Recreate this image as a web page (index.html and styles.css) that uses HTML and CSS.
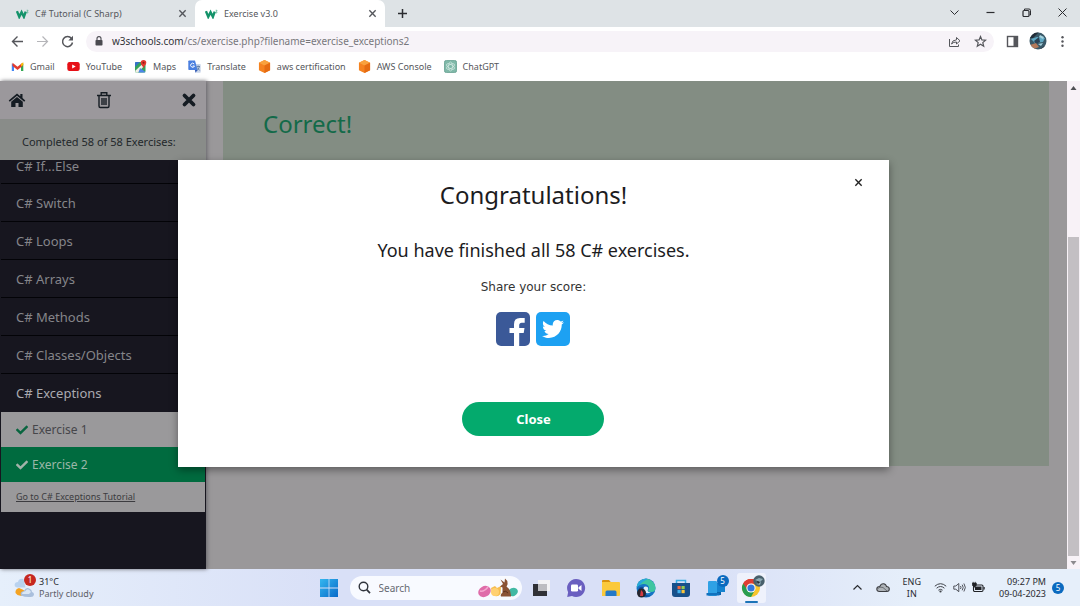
FILE: index.html
```html
<!DOCTYPE html>
<html lang="en">
<head>
<meta charset="utf-8">
<title>Exercise v3.0</title>
<link rel="stylesheet" href="styles.css">
</head>
<body>
<svg class="defs" aria-hidden="true">
  <symbol id="w3" viewBox="0 0 14 10"><path d="M1 2l2.500 6L6 3l2.500 5L10.500 2.500" fill="none" stroke="#14936a" stroke-width="2.600"/><path d="M11.500 1h1.500l-.8 1.200q1.200.3.600 1.500l-1.200.3" fill="none" stroke="#4fb08d" stroke-width=".8"/></symbol>
  <symbol id="x" viewBox="0 0 10 10"><path d="M1.500 1.500l7 7M8.500 1.500l-7 7" fill="none" stroke="currentColor" stroke-width="1.500"/></symbol>
  <symbol id="cube" viewBox="0 0 14 14"><path d="M7 0l6 3v8l-6 3-6-3V3z" fill="#f58220"/><path d="M7 0l6 3-6 3-6-3z" fill="#f9a13e"/><path d="M7 6l6-3v8l-6 3z" fill="#e56b12"/></symbol>
  <symbol id="check" viewBox="0 0 512 512"><path fill="currentColor" d="M173.898 439.404l-166.400-166.400c-9.997-9.997-9.997-26.206 0-36.204l36.203-36.204c9.997-9.998 26.207-9.998 36.204 0L192 312.690 432.095 72.596c9.997-9.997 26.207-9.997 36.204 0l36.203 36.204c9.997 9.997 9.997 26.206 0 36.204l-294.400 294.401c-9.998 9.997-26.207 9.997-36.204-.001z"/></symbol>
</svg>

<header class="browser">
  <div class="tabs">
    <div class="tab">
      <svg class="fav"><use href="#w3"/></svg><span class="tab-title">C# Tutorial (C Sharp)</span>
      <button class="icon-btn" aria-label="Close tab"><svg class="i9"><use href="#x"/></svg></button>
    </div>
    <div class="tab active">
      <svg class="fav"><use href="#w3"/></svg><span class="tab-title">Exercise v3.0</span>
      <button class="icon-btn" aria-label="Close tab"><svg class="i9"><use href="#x"/></svg></button>
    </div>
    <button class="icon-btn new-tab" aria-label="New tab"><svg class="i11" viewBox="0 0 11 11"><path d="M5.500 1v9M1 5.500h9" stroke="currentColor" stroke-width="1.500"/></svg></button>
    <div class="window-controls">
      <button class="icon-btn" aria-label="Search tabs"><svg class="i11" viewBox="0 0 11 11"><path d="M1.500 3.500l4 4 4-4" fill="none" stroke="currentColor"/></svg></button>
      <button class="icon-btn" aria-label="Minimize"><svg class="i11" viewBox="0 0 11 11"><path d="M1.500 5.500h8" stroke="currentColor" stroke-width="1.200"/></svg></button>
      <button class="icon-btn" aria-label="Restore"><svg class="i11" viewBox="0 0 11 11"><path d="M3.500 3V2h4.500q1.500 0 1.500 1.500V8h-1" fill="none" stroke="currentColor"/><rect x="2" y="3.500" width="6" height="6" rx="1" fill="none" stroke="currentColor" stroke-width="1.200"/></svg></button>
      <button class="icon-btn" aria-label="Close"><svg class="i11" viewBox="0 0 11 11"><path d="M1.500 1.500l8 8M9.500 1.500l-8 8" stroke="currentColor"/></svg></button>
    </div>
  </div>

  <div class="toolbar">
    <button class="icon-btn" aria-label="Back"><svg class="i13" viewBox="0 0 13 13"><path d="M12 6.500H2M6.500 1.500l-5 5 5 5" fill="none" stroke="currentColor" stroke-width="1.400"/></svg></button>
    <button class="icon-btn faded" aria-label="Forward"><svg class="i13" viewBox="0 0 13 13"><path d="M1 6.500h10M6.500 1.500l5 5-5 5" fill="none" stroke="currentColor" stroke-width="1.200"/></svg></button>
    <button class="icon-btn" aria-label="Reload"><svg class="i13" viewBox="0 0 13 13"><path d="M10.500 3.500a5 5 0 1 0 1 4" fill="none" stroke="currentColor" stroke-width="1.500"/><path d="M12 .8v4.700H7.300z" fill="currentColor"/></svg></button>
    <div class="address">
      <svg class="lock" viewBox="0 0 8 10"><rect x=".5" y="4" width="7" height="5.500" rx=".8" fill="#4a4a50"/><path d="M2 4V2.600a2 2 0 0 1 4 0V4" fill="none" stroke="#4a4a50" stroke-width="1.100"/></svg>
      <span class="url"><span class="host">w3schools.com</span>/cs/exercise.php?filename=exercise_exceptions2</span>
      <button class="icon-btn" aria-label="Share"><svg class="i13" viewBox="0 0 13 13"><path d="M1.500 4v7.500h9V9.500" fill="none" stroke="currentColor"/><path d="M3.500 9q.5-4 5-4.200V2.500L12 5.800 8.500 9V7Q5.500 6.800 3.500 9z" fill="none" stroke="currentColor" stroke-linejoin="round"/></svg></button>
      <button class="icon-btn" aria-label="Bookmark"><svg class="i13" viewBox="0 0 13 13"><path d="M6.500 1.500l1.400 3.400 3.700.3-2.800 2.400.9 3.600-3.200-2-3.200 2 .9-3.600L1.400 5.200l3.700-.3z" fill="none" stroke="currentColor" stroke-width="1.200"/></svg></button>
    </div>
    <button class="icon-btn" aria-label="Side panel"><svg class="i13" viewBox="0 0 13 13"><rect x="1.500" y="1.500" width="10" height="10" fill="none" stroke="currentColor" stroke-width="1.400"/><path d="M7.500 1.500h4v10h-4z" fill="currentColor"/></svg></button>
    <button class="icon-btn" aria-label="Profile"><svg class="avatar" viewBox="0 0 18 18"><clipPath id="av"><circle cx="9" cy="9" r="8.500"/></clipPath><g clip-path="url(#av)"><path fill="#3a5968" d="M0 0h18v18H0z"/><path fill="#232d38" d="M0 0h10L4 6H0zM10 18l8-6v6z"/><path d="M2 7l6-2 8 1-2 4-8 1z" fill="#5fa9c4"/><path d="M5 9l5-4 1 5-4 2z" fill="#2b4154"/><path d="M1 13l6-2 3 4-5 2z" fill="#b4795a"/><path d="M11 3l4 2-1 2-4-2zM9 12l5-1-2 3z" fill="#a4d2de"/></g></svg></button>
    <button class="icon-btn" aria-label="Menu"><svg class="i13" viewBox="0 0 13 13" fill="currentColor"><circle cx="6.500" cy="2.200" r="1.200"/><circle cx="6.500" cy="6.500" r="1.200"/><circle cx="6.500" cy="10.800" r="1.200"/></svg></button>
  </div>

  <nav class="bookmarks">
    <a href="#"><svg class="i13" viewBox="0 0 13 13"><path d="M.8 11V3.500L3 5v6z" fill="#4285f4"/><path d="M10 5l2.300-1.500V11H10z" fill="#34a853"/><path d="M1.500 2.800l5 4 5-4V6l-5 4-5-4z" fill="#e33b2e"/><path d="M10 4l2.300-1.800V5L10 6.500z" fill="#fbbc04"/></svg>Gmail</a>
    <a href="#"><svg class="i13" viewBox="0 0 13 13"><rect x=".3" y="2" width="12.400" height="9" rx="2.200" fill="#e60f16"/><path d="M5.200 4.500l3.500 2-3.500 2z" fill="#fff"/></svg>YouTube</a>
    <a href="#"><svg class="i13" viewBox="0 0 13 13"><rect x="1" y="2" width="10.500" height="10.500" rx="1.500" fill="#34a35a"/><path d="M1 11L10 2.500l1.500 2L4 12.500H2z" fill="#f1efe6"/><path d="M6 8l5.500 4-1 .5H4.500z" fill="#4d86e8"/><path d="M1 3q0-1 1-1h4L1 7z" fill="#3571c9"/><path d="M9.500 0a2.800 2.800 0 0 1 2.800 2.800C12.300 5 10 6 9.500 8.500 9 6 6.700 5 6.700 2.800A2.800 2.800 0 0 1 9.500 0z" fill="#e2382e"/><circle cx="9.500" cy="2.800" r="1" fill="#8e1b15"/></svg>Maps</a>
    <a href="#"><svg class="i13" viewBox="0 0 13 13"><path d="M5 4h7q.7 0 .7.700v7.300q0 .7-.7.700H7.500z" fill="#c9d5ea"/><path d="M1 .5h6L9.500 10H1q-.7 0-.7-.7V1.200Q.3.500 1 .5z" fill="#4a7fe0"/><path d="M6.200 4A2 2 0 1 0 6.500 6H4.700" fill="none" stroke="#fff"/><path d="M8.500 6.500h3.500M10.200 5.500v1M11.500 6.500Q10.500 10 8.800 10.500M9.200 7.500l2.500 3" fill="none" stroke="#56759f" stroke-width=".8"/><path d="M7 10h2.500L7.500 12.700z" fill="#2e56b5"/></svg>Translate</a>
    <a href="#"><svg class="i13"><use href="#cube"/></svg>aws certification</a>
    <a href="#"><svg class="i13"><use href="#cube"/></svg>AWS Console</a>
    <a href="#"><svg class="i13" viewBox="0 0 13 13"><rect x=".4" y=".4" width="12.200" height="12.200" rx="2" fill="#7fb8a8" stroke="#609c8c" stroke-width=".8"/><g fill="none" stroke="#d3e9e3" stroke-width=".7"><ellipse cx="6.500" cy="6.500" rx="2" ry="4.500"/><ellipse cx="6.500" cy="6.500" rx="2" ry="4.500" transform="rotate(60 6.500 6.500)"/><ellipse cx="6.500" cy="6.500" rx="2" ry="4.500" transform="rotate(120 6.500 6.500)"/></g></svg>ChatGPT</a>
  </nav>
</header>

<div class="viewport">
  <div class="page">
    <aside class="sidebar">
      <div class="side-tools">
        <a href="#" aria-label="Home"><svg class="i18" viewBox="0 0 18 16"><path d="M9 1.500L.7 8.500l1.100 1.200L9 3.700l7.200 6 1.100-1.200-2.800-2.400V2h-2.200v2.300z"/><path d="M9 5l-5.800 4.800v5.200h4.300v-4h3v4h4.300V9.800z"/></svg></a>
        <button class="icon-btn" aria-label="Reset"><svg class="i18" viewBox="0 0 18 18"><path d="M2 4.500h14M6.200 4V1.800h5.600V4M4 4.500V15q0 1.500 1.300 1.500h7.400Q14 16.500 14 15V4.500M7 7v7M9 7v7M11 7v7" fill="none" stroke="currentColor" stroke-width="1.400"/></svg></button>
        <button class="icon-btn" aria-label="Hide menu"><svg class="i16" viewBox="0 0 16 16"><path d="M3.500 3.500l9 9M12.500 3.500l-9 9" fill="none" stroke="currentColor" stroke-width="3.800" stroke-linecap="round"/></svg></button>
      </div>
      <p class="completed">Completed 58 of 58 Exercises:</p>
      <nav class="topics">
        <a class="topic partial" href="#">C# If...Else</a>
        <a class="topic" href="#">C# Switch</a>
        <a class="topic" href="#">C# Loops</a>
        <a class="topic" href="#">C# Arrays</a>
        <a class="topic" href="#">C# Methods</a>
        <a class="topic" href="#">C# Classes/Objects</a>
        <a class="topic open" href="#">C# Exceptions</a>
        <a class="exercise" href="#"><svg class="tick"><use href="#check"/></svg>Exercise 1</a>
        <a class="exercise current" href="#"><svg class="tick"><use href="#check"/></svg>Exercise 2</a>
        <a class="tutorial" href="#">Go to C# Exceptions Tutorial</a>
      </nav>
    </aside>
    <main class="content"><section class="result"><h2>Correct!</h2></section></main>
    <div class="overlay">
      <div class="dialog" role="dialog" aria-labelledby="dialog-title">
        <button class="icon-btn dismiss" aria-label="Dismiss"><svg class="i9"><use href="#x"/></svg></button>
        <h1 id="dialog-title">Congratulations!</h1>
        <p class="finished">You have finished all 58 C# exercises.</p>
        <p class="share-label">Share your score:</p>
        <div class="share">
          <a href="#" aria-label="Facebook"><svg class="i34" viewBox="0 0 34 34"><rect width="34" height="34" rx="5" fill="#3b5998"/><path d="M18 34V21h-4.500v-5H18v-3.700Q18 6 24 6h4.700v4.800h-3q-2.500 0-2.500 2.500V16h5.300l-.8 5h-4.500v13z" fill="#fff"/></svg></a>
          <a href="#" aria-label="Twitter"><svg class="i34" viewBox="0 0 34 34"><rect width="34" height="34" rx="5" fill="#1da1f2"/><svg x="6" y="6" width="22" height="22" viewBox="0 0 512 512"><path fill="#fff" d="M459.370 151.716c.325 4.548.325 9.097.325 13.645 0 138.720-105.583 298.558-298.558 298.558-59.452 0-114.680-17.219-161.137-47.106 8.447.974 16.568 1.299 25.340 1.299 49.055 0 94.213-16.568 130.274-44.832-46.132-.975-84.792-31.188-98.112-72.772 6.498.974 12.995 1.624 19.818 1.624 9.421 0 18.843-1.300 27.614-3.573-48.081-9.747-84.143-51.980-84.143-102.985v-1.299c13.969 7.797 30.214 12.670 47.431 13.319-28.264-18.843-46.781-51.005-46.781-87.391 0-19.492 5.197-37.360 14.294-52.954 51.655 63.675 129.300 105.258 216.365 109.807-1.624-7.797-2.599-15.918-2.599-24.040 0-57.828 46.782-104.934 104.934-104.934 30.213 0 57.502 12.670 76.670 33.137 23.715-4.548 46.456-13.320 66.599-25.340-7.798 24.366-24.366 44.833-46.132 57.827 21.117-2.273 41.584-8.122 60.426-16.243-14.292 20.791-32.161 39.308-52.628 54.253z"/></svg></svg></a>
        </div>
        <button class="close-btn">Close</button>
      </div>
    </div>
  </div>
  <div class="scrollbar" aria-hidden="true">
    <svg class="i13" viewBox="0 0 13 13"><path d="M3.500 9l3-4 3 4z" fill="#505055"/></svg>
    <div class="track"><div class="thumb"></div></div>
    <svg class="i13" viewBox="0 0 13 13"><path d="M3.500 5l3 4 3-4z" fill="#8c8a8e"/></svg>
  </div>
</div>

<footer class="taskbar">
  <div class="weather">
    <svg class="weather-icon" viewBox="0 0 22 26"><path d="M1 11.500q-1.500-4 3-4.500 1-4 5.500-3l2 8.500H3z" fill="#b9d2ef"/><path d="M5 13q-4 1-3.500 5 2 3.500 7 2.500l5-3-5-3z" fill="#f4a322"/><path d="M7 20.500q-1.500-4 3-4.500 2-4.500 6-2 2 1 2 3 3.500 1.500 1 4.500-6 1.500-12-1z" fill="#a9bfdd"/><path d="M8 19q0-3 3-2.500 3-4.500 6 .5l-2 2z" fill="#dbe7f5"/></svg>
    <span class="alert">1</span>
    <div><div class="temp">31°C</div><div class="cond">Partly cloudy</div></div>
  </div>
  <div class="apps">
    <button class="app" aria-label="Start"><svg class="i20" viewBox="0 0 20 20"><defs><linearGradient id="win" x2="1" y2="1"><stop stop-color="#35b7ef"/><stop offset="1" stop-color="#0869c9"/></linearGradient></defs><path fill="url(#win)" d="M1 1h8.600v8.600H1zM10.400 1H19v8.600h-8.600zM1 10.400h8.600V19H1zM10.400 10.400H19V19h-8.600z"/></svg></button>
    <label class="search"><svg class="i13" viewBox="0 0 13 13"><circle cx="5.500" cy="5.500" r="4.300" fill="none" stroke="#30343c" stroke-width="1.400"/><path d="M8.700 8.700l3.300 3.500" stroke="#30343c" stroke-width="1.700"/></svg><input type="text" placeholder="Search" aria-label="Search"><svg class="easter" viewBox="0 0 40 20"><ellipse cx="6.500" cy="13.500" rx="6.500" ry="5.300" transform="rotate(-30 6.500 13.500)" fill="#df6ca9"/><path d="M2 13q4 1 8-4" stroke="#f5a7cf" fill="none" stroke-width="1.500"/><path d="M13 10l4-2 2 2 4-2-.5 8q-3 4-8 1z" fill="#f6bd4e"/><circle cx="17" cy="14" r="4" fill="#ffd071"/><ellipse cx="35" cy="14" rx="5" ry="4" transform="rotate(-25 35 14)" fill="#42b9a3"/><path d="M25 6l-2.500-4.500 4 3L27 .5q3 2 2.500 6l-1 2q5 4 4.500 10H23q-1-2 1.500-4V9.500L22 8.500z" fill="#8a5234"/><path d="M25 14q3-2 5 1" stroke="#5b311e" fill="none"/></svg></label>
    <button class="app" aria-label="Task view"><svg class="i20" viewBox="0 0 20 20"><path d="M2 6h14v12H2z" fill="#303136"/><path d="M7 2h12v11H7z" fill="#f3f3f5"/><path d="M7 6h9v7H7z" fill="#bdbdc1"/></svg></button>
    <button class="app" aria-label="Chat"><svg class="i20" viewBox="0 0 20 20"><path d="M10 1a9 9 0 1 1-4 17L1.200 19l.9-4.800A9 9 0 0 1 10 1z" fill="#6a5fc0"/><rect x="5" y="6.500" width="7" height="7" rx="1.200" fill="#fff"/><path d="M12.500 9.200L15.500 7v6l-3-2.200z" fill="#fff"/></svg></button>
    <button class="app" aria-label="File Explorer"><svg class="i20" viewBox="0 0 20 20"><path d="M1 3q0-1 1-1h6l2 2.200H1z" fill="#d9920e"/><path d="M1 4h17q1 0 1 1v12q0 1-1 1H1z" fill="#fbc93c"/><path d="M4.500 18v-4q0-1.500 1.500-1.500h8q1.500 0 1.500 1.500v4z" fill="#2479c8"/></svg></button>
    <button class="app" aria-label="Edge"><svg class="i20" viewBox="0 0 20 20"><circle cx="10" cy="10" r="9.500" fill="#1675c5"/><path d="M.6 9A9.500 9.500 0 0 1 19.500 10q0 4-4 4-3 0-3.500-1.500 1-1.500 1-3Q12 5.500 7 6 3 6.500.6 9z" fill="#3ec5a0"/><path d="M.6 9A9.500 9.500 0 0 1 12 1Q7 3 4 7z" fill="#26a7dc"/><path d="M7.500 9q-2 4 1 7 3 2.500 7.500 1-5 3-10 .7Q1 15 3 10q2-2 4.500-1z" fill="#114b94"/><path d="M8 9q2-1 4 .5.500 1.500-.5 3Q12 14.500 15 14.500q-5 2-7-1-1-2.500 0-4.500z" fill="#e1edf7"/><circle cx="5.500" cy="15" r="4.500" fill="#252630"/><path d="M5 12q3 2 2 6H4z" fill="#d33c42"/></svg></button>
    <button class="app" aria-label="Store"><svg class="i20" viewBox="0 0 20 20"><path d="M5.500 5V2.500h9V5" fill="none" stroke="#36aee4" stroke-width="1.500"/><path d="M1 5h18v11q0 3-3 3H4q-3 0-3-3z" fill="#17508a"/><path d="M6.500 8h3.200v3.200H6.500z" fill="#ee673e"/><path d="M10.500 8h3.200v3.200h-3.200z" fill="#94c94d"/><path d="M6.500 12h3.200v3.200H6.500z" fill="#3fb1ed"/><path d="M10.500 12h3.200v3.200h-3.200z" fill="#fac53a"/></svg></button>
    <button class="app" aria-label="Phone Link"><svg class="i20" viewBox="0 0 20 20"><path d="M7 5h12v9H7z" fill="#1482cf"/><path d="M10 14h5v3h-5z" fill="#0b64a9"/><rect x="2" y="3" width="9" height="15" rx="1.200" fill="#2fa1e5"/><path d="M.5 15h13v2.500H.5z" fill="#1271bd"/></svg><span class="count">5</span></button>
    <button class="app running" aria-label="Chrome"><svg class="i20" viewBox="0 0 20 20"><circle cx="10" cy="10" r="9" fill="#f8c52d"/><path d="M10 10L2.200 5.500A9 9 0 0 1 17.800 5.500H10z" fill="#df3e33"/><path d="M2.200 5.500A9 9 0 0 0 10 19l4-7z" fill="#299d50"/><path d="M2.200 5.500A9 9 0 0 1 17.800 5.500H10L6 11z" fill="#df3e33"/><circle cx="10" cy="10" r="4.600" fill="#fff"/><circle cx="10" cy="10" r="3.600" fill="#3278dd"/></svg><svg class="profile-dot" viewBox="0 0 12 12"><circle cx="6" cy="6" r="5.700" fill="#48606c"/><path d="M2 5l4-2 4 1-3 3zM3 9l5-2-1 3z" fill="#8eabb5"/><path d="M4 6l3 1-2 2z" fill="#262e36"/></svg></button>
  </div>
  <div class="tray">
    <button class="icon-btn" aria-label="Hidden icons"><svg class="i11" viewBox="0 0 11 11"><path d="M1.500 7.500l4-4 4 4" fill="none" stroke="currentColor" stroke-width="1.200"/></svg></button>
    <svg class="cloud" viewBox="0 0 14 11"><path d="M3.500 9.500Q.8 9.500.8 7t3-2.500Q5 1.500 7.500 1.700t3 2.800q2.800.2 2.800 2.500t-2.500 2.500z" fill="#aeb3b8" stroke="#3b3d42" stroke-width="1.100"/><path d="M1 7q3-3 6-1.500L11 9" fill="none" stroke="#696d72"/></svg>
    <div class="lang">ENG<br>IN</div>
    <div class="status">
      <svg class="i13" viewBox="0 0 13 13"><g fill="none" stroke="#3f4249" stroke-width="1"><path d="M.8 5.200q5.700-5 11.400 0M2.600 7.200q3.900-3.400 7.800 0M4.400 9.200q2.100-1.700 4.200 0"/></g><circle cx="6.500" cy="10.500" r="1.100" fill="#3f4249"/></svg>
      <svg class="i13" viewBox="0 0 13 13"><path d="M.8 5v3.200h2l3 2.500V2.500L2.800 5z M7.500 5q1 1.500 0 3M9.200 3.700q2 2.800 0 5.600M10.900 2.500q2.900 4 0 8" fill="none" stroke="#3f4249" stroke-width=".9"/></svg>
      <svg class="i13" viewBox="0 0 13 13"><rect x="1.500" y="4" width="9.500" height="6.500" rx="1.200" fill="none" stroke="#202226" stroke-width="1.100"/><path d="M3 5.500h6.500V9H3zM11.500 6h1.200v2.500h-1.200z" fill="#202226"/><path d="M.3 2h4v2.500L2.500 6.200.5 4.500zM1.200.8v1.500M3.300.8v1.500" fill="#202226" stroke="#202226" stroke-width=".7"/></svg>
    </div>
    <div class="clock">09:27 PM<br>09-04-2023</div>
    <span class="notices">5</span>
  </div>
</footer>
</body>
</html>
```
FILE: styles.css
```css
* { box-sizing: border-box; }
body {
  margin: 0;
  height: 100vh;
  display: flex;
  flex-direction: column;
  overflow: hidden;
  font-family: "Noto Sans", "Open Sans", sans-serif;
  font-size: 9px;
  line-height: 12px;
  color: #55575c;
}
h1, h2, p { margin: 0; font-weight: 400; }
a { color: inherit; text-decoration: none; }
svg { display: block; flex: none; }
button { font: inherit; color: inherit; }
.defs { position: absolute; width: 0; height: 0; }
.icon-btn { display: grid; place-items: center; padding: 0; border: 0; background: none; }
.i9 { width: 9px; height: 9px; }
.i11 { width: 11px; height: 11px; }
.i13 { width: 13px; height: 13px; }
.i16 { width: 16px; height: 16px; }
.i18 { width: 18px; height: 18px; }
.i20 { width: 20px; height: 20px; }
.i34 { width: 34px; height: 34px; }

.browser { flex: none; background: #fff; }
.tabs { display: flex; height: 27px; background: #dee3e6; }
.tab { display: flex; align-items: center; gap: 6px; width: 195px; padding: 0 8px 0 16px; }
.tab.active { width: 190px; padding-left: 10px; background: #fff; border-radius: 7px 7px 0 0; }
.fav { width: 13px; height: 10px; }
.tab-title { flex: 1; }
.new-tab { width: 34px; color: #2b2c30; }
.window-controls { display: flex; margin-left: auto; color: #2b2c30; }
.window-controls .icon-btn { width: 36px; height: 24px; }
.toolbar { display: flex; align-items: center; height: 28px; padding: 0 5px; color: #55565b; }
.toolbar > .icon-btn { width: 25px; }
.faded { color: #b5b5b9; }
.address { flex: 1; display: flex; align-items: center; height: 21px; margin: 0 6px; padding: 0 1px 0 9px; border-radius: 11px; background: #f7f3f8; }
.address .icon-btn { width: 26px; }
.lock { width: 8px; height: 10px; margin-right: 9px; }
.url { flex: 1; font-size: 10px; color: #77777c; }
.host { color: #323338; }
.avatar { width: 18px; height: 18px; }
.bookmarks { display: flex; gap: 12px; height: 26px; padding: 0 11px 3px; }
.bookmarks a { display: flex; align-items: center; gap: 6px; }

.viewport { flex: 1; display: flex; min-height: 0; }
.page { position: relative; flex: 1; display: flex; min-width: 0; background: #9a989a; }
.sidebar { flex: none; display: flex; flex-direction: column; width: 206px; background: #17161f; box-shadow: 1px 0 4px #66646a; }
.side-tools { flex: none; display: flex; align-items: center; justify-content: space-between; height: 38px; padding: 0 9px 0 8px; background: #9b989c; color: #151c23; fill: #151c23; }
.completed { flex: none; height: 41px; padding: 13px 0 0 22px; background: #898c89; color: #23282b; font-size: 11px; line-height: 20px; }
.topics { flex: 1; min-height: 0; display: flex; flex-direction: column; padding: 0 1px; }
.topics > * { flex: none; padding-left: 15px; }
.topic { height: 38px; border-bottom: 1px solid #030307; font-size: 13px; line-height: 38px; color: #85858a; }
.topic.partial { height: 24px; line-height: 12px; }
.topic.open { border: 0; color: #aaaab0; }
.exercise { display: flex; align-items: center; gap: 4px; height: 35px; background: #9a999b; color: #46464a; font-size: 12px; }
.exercise.current { background: #006b3f; color: #9bb7a8; }
.tick { width: 12px; height: 12px; color: #08653f; }
.current .tick { color: #a3b3aa; }
.tutorial { height: 30px; background: #9a999b; font-size: 9px; line-height: 30px; color: #3c3c40; text-decoration: underline; }
.content { flex: 1; padding: 0 18px 0 17px; }
.result { height: calc(100% - 103px); padding: 24px 40px; background: #838d83; }
.result h2 { font-size: 24px; line-height: 38px; color: #136a49; }

.overlay { position: absolute; inset: 0; display: flex; justify-content: center; align-items: flex-start; padding-top: 79px; }
.dialog { position: relative; display: flex; flex-direction: column; align-items: center; width: calc(100% * 2 / 3); padding: 16px 16px 31px; background: #fff; box-shadow: 0 3px 8px rgba(0, 0, 0, .4); color: #1c1c1e; }
.dialog h1 { font-size: 24px; line-height: 38px; }
.dismiss { position: absolute; top: 18px; right: 26px; color: #222; }
.finished { margin-top: 22px; font-size: 18px; line-height: 28px; }
.share-label { margin-top: 13px; font: 12px/20px "DejaVu Sans", Verdana, sans-serif; color: #333; }
.share { display: flex; gap: 6px; margin: 15px 0 56px; }
.close-btn { width: 142px; height: 34px; border: 0; border-radius: 17px; background: #04aa6d; color: #fff; font-size: 13px; font-weight: 700; }
.scrollbar { flex: none; display: flex; flex-direction: column; width: 13px; background: #f8f2f7; }
.track { flex: 1; display: flex; align-items: flex-end; padding: 0 1px; }
.thumb { width: 100%; height: 69%; background: #c3bfc3; }

.taskbar { flex: none; display: grid; grid-template-columns: 1fr auto 1fr; height: 37px; background: linear-gradient(90deg, #e6effb, #d9e0f7 30%, #d9e0f7 65%, #e6effa 85%); }
.weather { position: relative; display: flex; align-items: center; gap: 3px; padding-left: 14px; }
.weather-icon { width: 22px; height: 26px; }
.temp { color: #26282c; }
.cond { color: #5d6068; }
.alert, .count, .notices { display: grid; place-items: center; width: 12px; height: 12px; border-radius: 50%; color: #fff; font-size: 8px; line-height: 12px; background: #0b6abf; }
.alert { position: absolute; left: 24px; top: 5px; background: #c62820; }
.apps { display: flex; align-items: center; }
.app { position: relative; display: grid; place-items: center; width: 35px; height: 34px; padding: 0; border: 0; background: none; }
.search { display: flex; align-items: center; gap: 8px; width: 172px; height: 24px; margin: 0 2px 0 3px; padding: 0 4px 0 8px; border-radius: 12px; background: #f8faff; }
.search input { flex: 1; min-width: 0; padding: 0; border: 0; outline: 0; background: none; font: 10px/14px "Noto Sans", "Open Sans", sans-serif; }
.search input::placeholder { color: #666a72; opacity: 1; }
.easter { width: 40px; height: 20px; }
.count { position: absolute; top: 4px; right: 5px; }
.running::before { content: ""; position: absolute; inset: 2px 3px; border-radius: 3px; background: #eff2fc; }
.running::after { content: ""; position: absolute; left: 11px; right: 11px; bottom: 2px; height: 2px; border-radius: 1px; background: #1c74b8; }
.running svg { position: relative; }
.running .profile-dot { position: absolute; top: 4px; right: 4px; width: 12px; height: 12px; }
.tray { display: flex; align-items: center; justify-content: flex-end; gap: 13px; padding-right: 16px; color: #292b30; }
.cloud { width: 14px; height: 11px; }
.lang { text-align: center; }
.status { display: flex; gap: 6px; }
.clock { margin-left: 1px; text-align: right; }
.notices { margin-left: -7px; }
```
